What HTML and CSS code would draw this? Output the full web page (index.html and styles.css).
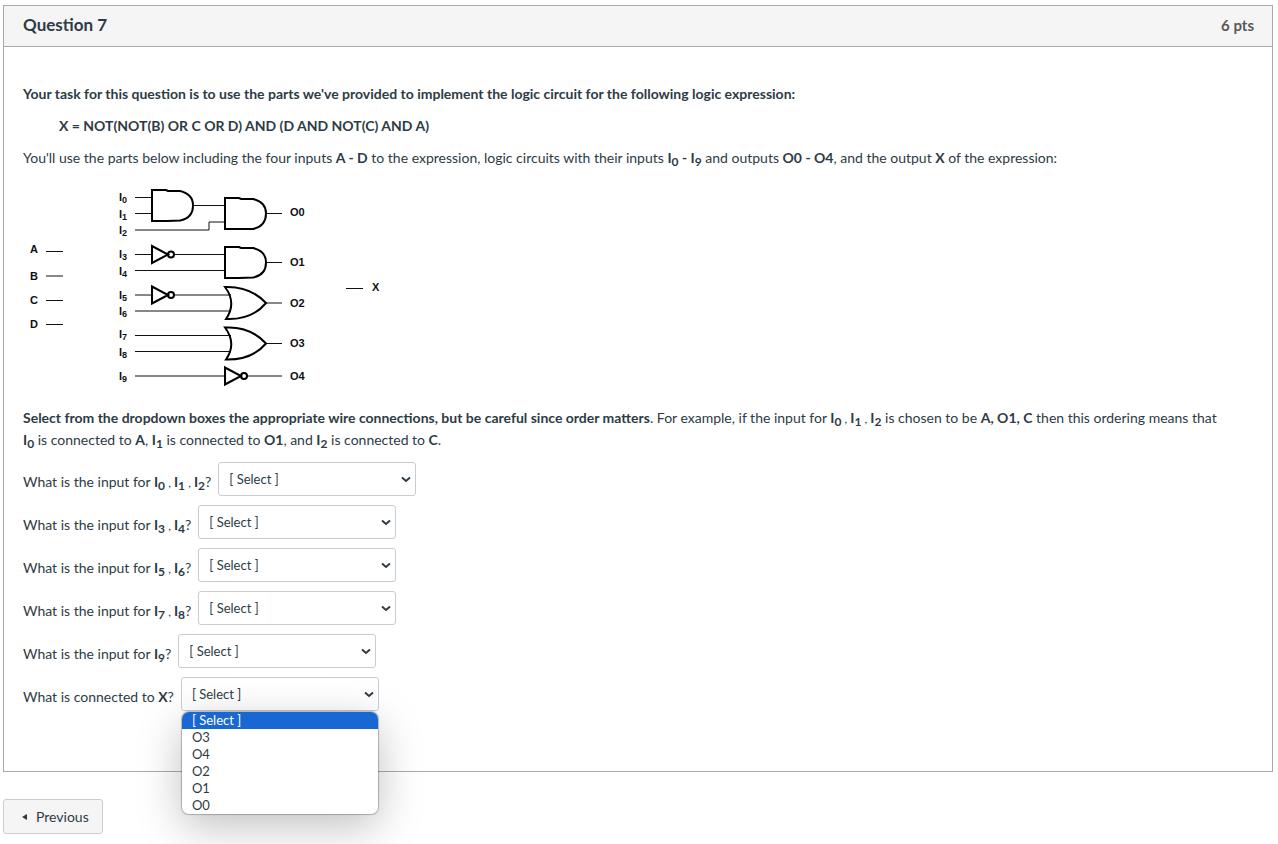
FILE: index.html
```
<!DOCTYPE html>
<html lang="en">
<head>
<meta charset="utf-8">
<title>Question 7</title>
<link rel="stylesheet" href="styles.css">
</head>
<body>
<main class="quiz">
  <section class="question">
    <header class="question-header">
      <h1 class="question-name">Question 7</h1>
      <span class="question-points">6 pts</span>
    </header>
    <div class="question-text">
      <p><strong>Your task for this question is to use the parts we've provided to implement the logic circuit for the following logic expression:</strong></p>
      <p class="expression"><strong>X = NOT(NOT(B) OR C OR D) AND (D AND NOT(C) AND A)</strong></p>
      <p>You'll use the parts below including the four inputs <strong>A - D</strong> to the expression, logic circuits with their inputs <strong>I<sub>0</sub> - I<sub>9</sub></strong> and outputs <strong>O0 - O4</strong>, and the output <strong>X</strong> of the expression:</p>
      <svg class="circuit" width="360" height="204" viewBox="23 184 360 204" role="img" aria-label="Logic gates with inputs and outputs">
        <g class="wires">
          <path d="M46 251.500H63M46 276H63M46 300.500H63M46 324.500H63M346 288.500H363"/>
          <path d="M135 197.500H151M135 213.500H151M193 205.500H224M135 230H209V222H224M266 213.500H282"/>
          <path d="M135 254.500H151M174 254.500H224M135 270.500H224M266 262.500H282"/>
          <path d="M135 295H151M174 295H231M135 311H230M266 303H282"/>
          <path d="M135 335.500H231M135 351.500H230M266 343.500H282"/>
          <path d="M135 376H224M247 376H282"/>
        </g>
        <g class="gates">
          <path d="M152 190H166L168 191H180Q193 194 193 205.500Q193 218 180 220.500L167 221H152Z"/>
          <path d="M225 198H239L241 199H253Q266 202 266 213.500Q266 226 253 229H225Z"/>
          <path d="M225 247H239L241 248H253Q266 251 266 262.500Q266 275 253 277.500L239 278H225Z"/>
          <path d="M225 287Q237 303 226 319Q252 320 266 303Q250 286 225 287Z"/>
          <path d="M225 327.500Q237 343.500 226 359.500Q252 360 266 343.500Q250 326 225 327.500Z"/>
          <path d="M152 246V263L168 254.500Z"/><circle cx="171" cy="254.500" r="3"/>
          <path d="M152 286.500V303.500L168 295Z"/><circle cx="171" cy="295" r="3"/>
          <path d="M225 367.500V384.500L241 376Z"/><circle cx="244" cy="376" r="3"/>
        </g>
        <g class="labels">
          <text x="30" y="253">A</text><text x="30" y="280">B</text><text x="30" y="304">C</text><text x="30" y="328">D</text>
          <text x="119" y="201">I<tspan class="index" dy="2">0</tspan></text>
          <text x="119" y="218">I<tspan class="index" dy="2">1</tspan></text>
          <text x="119" y="234">I<tspan class="index" dy="2">2</tspan></text>
          <text x="119" y="258">I<tspan class="index" dy="2">3</tspan></text>
          <text x="119" y="275">I<tspan class="index" dy="2">4</tspan></text>
          <text x="119" y="299">I<tspan class="index" dy="2">5</tspan></text>
          <text x="119" y="315">I<tspan class="index" dy="2">6</tspan></text>
          <text x="119" y="338">I<tspan class="index" dy="2">7</tspan></text>
          <text x="119" y="356">I<tspan class="index" dy="2">8</tspan></text>
          <text x="119" y="380">I<tspan class="index" dy="2">9</tspan></text>
          <text x="290" y="216">O0</text><text x="290" y="266">O1</text><text x="290" y="307">O2</text><text x="290" y="347">O3</text><text x="290" y="380">O4</text>
          <text x="372" y="291">X</text>
        </g>
      </svg>
      <p><strong>Select from the dropdown boxes the appropriate wire connections, but be careful since order matters</strong>. For example, if the input for <strong>I<sub>0</sub></strong><small> , </small><strong>I<sub>1</sub></strong><small> , </small><strong>I<sub>2</sub></strong> is chosen to be <strong>A, O1, C</strong> then this ordering means that <span class="together"><strong>I<sub>0</sub></strong> is connected</span> to <strong>A</strong>, <strong>I<sub>1</sub></strong> is connected to <strong>O1</strong>, and <strong>I<sub>2</sub></strong> is connected to <strong>C</strong>.</p>
      <div class="answers">
        <div class="answer"><label for="q0">What is the input for <strong>I<sub>0</sub></strong><small> , </small><strong>I<sub>1</sub></strong><small> , </small><strong>I<sub>2</sub></strong>?</label><span class="picker"><select id="q0"><option>[ Select ]</option></select><svg class="chevron" viewBox="0 0 10 7"><path d="M1 1.500L5 5L9 1.500"/></svg></span></div>
        <div class="answer"><label for="q1">What is the input for <strong>I<sub>3</sub></strong><small> , </small><strong>I<sub>4</sub></strong>?</label><span class="picker"><select id="q1"><option>[ Select ]</option></select><svg class="chevron" viewBox="0 0 10 7"><path d="M1 1.500L5 5L9 1.500"/></svg></span></div>
        <div class="answer"><label for="q2">What is the input for <strong>I<sub>5</sub></strong><small> , </small><strong>I<sub>6</sub></strong>?</label><span class="picker"><select id="q2"><option>[ Select ]</option></select><svg class="chevron" viewBox="0 0 10 7"><path d="M1 1.500L5 5L9 1.500"/></svg></span></div>
        <div class="answer"><label for="q3">What is the input for <strong>I<sub>7</sub></strong><small> , </small><strong>I<sub>8</sub></strong>?</label><span class="picker"><select id="q3"><option>[ Select ]</option></select><svg class="chevron" viewBox="0 0 10 7"><path d="M1 1.500L5 5L9 1.500"/></svg></span></div>
        <div class="answer"><label for="q4">What is the input for <strong>I<sub>9</sub></strong>?</label><span class="picker"><select id="q4"><option>[ Select ]</option></select><svg class="chevron" viewBox="0 0 10 7"><path d="M1 1.500L5 5L9 1.500"/></svg></span></div>
        <div class="answer"><label for="q5">What is connected to <strong>X</strong>?</label><span class="picker"><select id="q5"><option>[ Select ]</option></select><svg class="chevron" viewBox="0 0 10 7"><path d="M1 1.500L5 5L9 1.500"/></svg>
          <ul class="menu" role="listbox" aria-label="What is connected to X?">
            <li role="option" class="selected" aria-selected="true">[ Select ]</li>
            <li role="option">O3</li>
            <li role="option">O4</li>
            <li role="option">O2</li>
            <li role="option">O1</li>
            <li role="option">O0</li>
          </ul></span></div>
      </div>
    </div>
  </section>
  <button class="previous" type="button"><svg class="arrow" viewBox="0 0 5 6"><path d="M5 0V6L0 3Z"/></svg>Previous</button>
</main>
</body>
</html>
```
FILE: styles.css
```
* { box-sizing: border-box; }
body {
  margin: 0;
  min-height: 100vh;
  background: #fff;
  color: #2d3b45;
  font-family: Lato, sans-serif;
  font-size: 14px;
  line-height: 22px;
}
.quiz { padding: 5px 5px 10px 3px; }
.question { border: 1px solid #aaa; }
.question-header {
  display: flex;
  align-items: center;
  justify-content: space-between;
  height: 41px;
  padding: 0 18px 3px 19px;
  background: #f5f5f5;
  border-bottom: 1px solid #aaa;
}
.question-name { margin: 0; font-size: 17px; font-weight: 700; }
.question-points { color: #595959; font-size: 15px; font-weight: 700; }
.question-text { padding: 36px 19px 60px; }
p { margin: 0 0 10px; }
.expression { padding-left: 36px; }
strong { font-weight: 700; }
sub { font-size: 12px; line-height: 12px; vertical-align: -3px; }
small { font-size: 12px; line-height: 12px; }
.together { white-space: nowrap; }
.circuit { display: block; margin: 15px 0 19px; max-width: 100%; }
.wires { fill: none; stroke: #111; stroke-width: 1; }
.gates { fill: none; stroke: #000; stroke-width: 2; }
.labels { fill: #111; font: bold 11px "Liberation Sans", Arial, sans-serif; }
.index { font-size: 9px; }
.answers { display: flex; flex-direction: column; gap: 9px; padding-top: 1px; }
.answer { display: flex; align-items: center; gap: 7px; }
.answer label { padding-top: 6px; }
.picker { position: relative; display: flex; }
select {
  width: 198px;
  height: 34px;
  padding: 0 10px 1px;
  appearance: none;
  border: 1px solid #c7cdd1;
  border-radius: 3px;
  background: #fff;
  color: #2d3b45;
  font: 13px Lato, sans-serif;
}
.chevron {
  position: absolute;
  top: 14px;
  right: 5px;
  width: 10px;
  height: 7px;
  fill: none;
  stroke: #2d3b45;
  stroke-width: 2;
  pointer-events: none;
}
.menu {
  position: absolute;
  top: 35px;
  left: 1px;
  right: 1px;
  margin: 0;
  padding: 0;
  overflow: hidden;
  list-style: none;
  background: #fff;
  border-radius: 7px;
  box-shadow: 0 0 1px 1px rgba(0, 0, 0, .25), 0 12px 44px rgba(0, 0, 0, .25);
  font-size: 13px;
  line-height: 17px;
}
.menu li { padding-left: 10px; }
.menu .selected { background: #1967d2; color: #fff; }
.previous {
  display: flex;
  align-items: center;
  gap: 9px;
  height: 35px;
  margin-top: 27px;
  padding: 0 13px 0 18px;
  border: 1px solid #c7cdd1;
  border-radius: 3px;
  background: #f5f5f5;
  color: #2d3b45;
  font: 14px Lato, sans-serif;
}
.arrow { width: 5px; height: 6px; fill: #2d3b45; }
```
